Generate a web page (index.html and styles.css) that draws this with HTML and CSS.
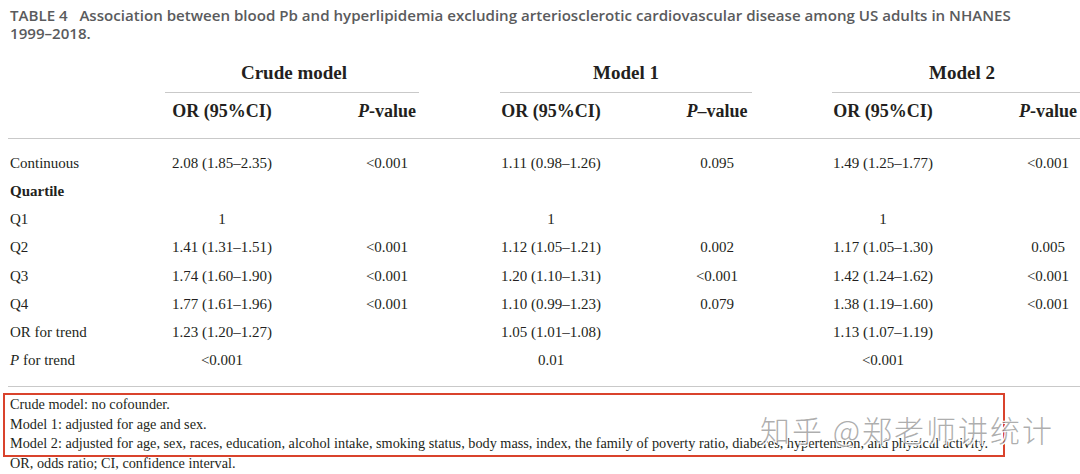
FILE: index.html
```html
<!DOCTYPE html>
<html lang="en">
<head>
<meta charset="utf-8">
<title>Table 4</title>
<link rel="stylesheet" href="styles.css">
</head>
<body>
<div class="page">
  <p class="caption">TABLE 4&nbsp;&nbsp; Association between blood Pb and hyperlipidemia excluding arteriosclerotic cardiovascular disease among US adults in NHANES 1999–2018.</p>

  <div class="table">
    <div class="row group-row">
      <div class="cell"></div>
      <div class="group g-crude">Crude model</div>
      <div class="group g-m1">Model 1</div>
      <div class="group g-m2">Model 2</div>
    </div>
    <div class="row head-row">
      <div class="cell"></div>
      <div class="cell c">OR (95%CI)</div>
      <div class="cell c"><i>P</i>-value</div>
      <div class="cell c">OR (95%CI)</div>
      <div class="cell c"><i>P</i>–value</div>
      <div class="cell c">OR (95%CI)</div>
      <div class="cell c last"><i>P</i>-value</div>
    </div>

    <div class="body">
      <div class="row data">
        <div class="cell lab">Continuous</div>
        <div class="cell c">2.08 (1.85–2.35)</div>
        <div class="cell c">&lt;0.001</div>
        <div class="cell c">1.11 (0.98–1.26)</div>
        <div class="cell c">0.095</div>
        <div class="cell c">1.49 (1.25–1.77)</div>
        <div class="cell c last">&lt;0.001</div>
      </div>
      <div class="row data">
        <div class="cell lab"><b>Quartile</b></div>
      </div>
      <div class="row data">
        <div class="cell lab">Q1</div>
        <div class="cell c">1</div>
        <div class="cell c"></div>
        <div class="cell c">1</div>
        <div class="cell c"></div>
        <div class="cell c">1</div>
        <div class="cell c last"></div>
      </div>
      <div class="row data">
        <div class="cell lab">Q2</div>
        <div class="cell c">1.41 (1.31–1.51)</div>
        <div class="cell c">&lt;0.001</div>
        <div class="cell c">1.12 (1.05–1.21)</div>
        <div class="cell c">0.002</div>
        <div class="cell c">1.17 (1.05–1.30)</div>
        <div class="cell c last">0.005</div>
      </div>
      <div class="row data">
        <div class="cell lab">Q3</div>
        <div class="cell c">1.74 (1.60–1.90)</div>
        <div class="cell c">&lt;0.001</div>
        <div class="cell c">1.20 (1.10–1.31)</div>
        <div class="cell c">&lt;0.001</div>
        <div class="cell c">1.42 (1.24–1.62)</div>
        <div class="cell c last">&lt;0.001</div>
      </div>
      <div class="row data">
        <div class="cell lab">Q4</div>
        <div class="cell c">1.77 (1.61–1.96)</div>
        <div class="cell c">&lt;0.001</div>
        <div class="cell c">1.10 (0.99–1.23)</div>
        <div class="cell c">0.079</div>
        <div class="cell c">1.38 (1.19–1.60)</div>
        <div class="cell c last">&lt;0.001</div>
      </div>
      <div class="row data">
        <div class="cell lab">OR for trend</div>
        <div class="cell c">1.23 (1.20–1.27)</div>
        <div class="cell c"></div>
        <div class="cell c">1.05 (1.01–1.08)</div>
        <div class="cell c"></div>
        <div class="cell c">1.13 (1.07–1.19)</div>
        <div class="cell c last"></div>
      </div>
      <div class="row data">
        <div class="cell lab"><i>P</i> for trend</div>
        <div class="cell c">&lt;0.001</div>
        <div class="cell c"></div>
        <div class="cell c">0.01</div>
        <div class="cell c"></div>
        <div class="cell c">&lt;0.001</div>
        <div class="cell c last"></div>
      </div>
    </div>
  </div>

  <div class="notes">
    <div class="highlight">
      <p class="note">Crude model: no cofounder.</p>
      <p class="note">Model 1: adjusted for age and sex.</p>
      <p class="note">Model 2: adjusted for age, sex, races, education, alcohol intake, smoking status, body mass, index, the family of poverty ratio, diaberes, hypertension, and physical activity.</p>
    </div>
    <p class="note after">OR, odds ratio; CI, confidence interval.</p>
  </div>

  <div class="watermark">知乎 @郑老师讲统计</div>
</div>
</body>
</html>
```

FILE: styles.css
```css
html, body {
  margin: 0;
  padding: 0;
  background: #ffffff;
  overflow: hidden;
}

.page {
  position: relative;
  width: 1080px;
  height: 474px;
  padding: 6px 0 0 8px;
  box-sizing: border-box;
  font-family: "Liberation Serif", "Times New Roman", serif;
  color: #231f20;
}

.caption {
  margin: 0;
  width: 1010px;
  padding-left: 2px;
  font-family: "Open Sans", "Noto Sans", sans-serif;
  font-weight: 600;
  font-size: 15.1px;
  line-height: 18px;
  color: #5a5b5d;
}

.table {
  margin-top: 18px;
  width: 1072px;
}

.row {
  display: grid;
  grid-template-columns: 157px 114px 216px 112px 220px 112px 141px;
}

.cell.c {
  text-align: center;
}

.cell.last {
  padding-left: 77px;
  padding-right: 0;
}

.group-row {
  font-weight: 700;
  font-size: 19px;
  line-height: 26px;
}

.group {
  text-align: center;
  padding-bottom: 6px;
  border-bottom: 1px solid #c9c9c9;
}

.g-crude {
  grid-column: 2 / span 2;
  margin-right: 76px;
  padding-left: 4px;
}

.g-m1 {
  grid-column: 4 / span 2;
  margin-left: 5px;
  margin-right: 75px;
}

.g-m2 {
  grid-column: 6 / span 2;
  margin-left: 5px;
  padding-left: 12px;
}

.head-row {
  font-weight: 700;
  font-size: 18px;
  line-height: 26px;
  padding-top: 5px;
  padding-bottom: 14px;
  border-bottom: 1px solid #c9c9c9;
}

.body {
  padding-top: 10px;
  padding-bottom: 12px;
  border-bottom: 1px solid #c9c9c9;
}

.data {
  font-size: 15px;
  height: 28.15px;
  line-height: 28.15px;
}

.cell.lab {
  padding-left: 2px;
  white-space: nowrap;
}

.notes {
  margin-top: 6px;
}

.highlight {
  margin-left: -5px;
  width: 1002px;
  box-sizing: border-box;
  border: 2px solid #d9432c;
  padding: 0 0 1px 5px;
}

.note {
  margin: 0;
  font-size: 14.25px;
  line-height: 19.5px;
  white-space: nowrap;
}

.note.after {
  margin-top: -3px;
  padding-left: 2px;
}

.watermark {
  position: absolute;
  left: 760px;
  top: 411px;
  font-family: "Noto Sans CJK SC", "Noto Sans", sans-serif;
  font-weight: 300;
  font-size: 30px;
  line-height: 36px;
  letter-spacing: 2px;
  color: rgba(120, 120, 120, 0.6);
  text-shadow: 1px 1px 0 #ffffff, -1px -1px 0 #ffffff;
  white-space: nowrap;
}
```
